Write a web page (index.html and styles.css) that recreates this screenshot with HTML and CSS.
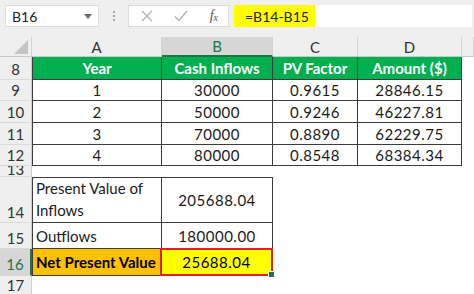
FILE: index.html
```html
<!DOCTYPE html>
<html lang="en">
<head>
    <meta charset="UTF-8">
    <title>NPV sheet</title>
    <link rel="stylesheet" href="styles.css">
</head>
<body>

    <div class="fbar">
        <div class="namebox">
            <span>B16</span>
            <svg class="drop" width="8" height="5" viewBox="0 0 8 5"><path d="M0 0h8L4 5z" fill="#6b6b6b"/></svg>
        </div>
        <div class="grip"><i></i><i></i><i></i></div>
        <div class="btns">
            <svg width="12" height="12" viewBox="0 0 12 12"><path d="M1 1l10 10M11 1L1 11" stroke="#b4b4b4" stroke-width="1.4"/></svg>
            <svg width="14" height="12" viewBox="0 0 14 12"><path d="M1 6.5l4 4L13 1" fill="none" stroke="#b4b4b4" stroke-width="1.4"/></svg>
            <span class="fx">f<sub>x</sub></span>
        </div>
        <div class="formula"><span class="hl">=B14-B15</span></div>
    </div>

    <div class="sheet">
        <!-- column headings -->
        <div class="corner"><svg width="14" height="14" viewBox="0 0 14 14"><path d="M14 0V14H0z" fill="#c4c4c4"/></svg></div>
        <div class="ch">A</div>
        <div class="ch sel">B</div>
        <div class="ch">C</div>
        <div class="ch">D</div>
        <div class="ch"></div>

        <div class="rh">8</div>
        <div class="c head first">Year</div>
        <div class="c head">Cash Inflows</div>
        <div class="c head">PV Factor</div>
        <div class="c head">Amount ($)</div>
        <div></div>

        <div class="rh">9</div>
        <div class="c first num">1</div>
        <div class="c num">30000</div>
        <div class="c num">0.9615</div>
        <div class="c num">28846.15</div>
        <div></div>

        <div class="rh">10</div>
        <div class="c first num">2</div>
        <div class="c num">50000</div>
        <div class="c num">0.9246</div>
        <div class="c num">46227.81</div>
        <div></div>

        <div class="rh">11</div>
        <div class="c first num">3</div>
        <div class="c num">70000</div>
        <div class="c num">0.8890</div>
        <div class="c num">62229.75</div>
        <div></div>

        <div class="rh">12</div>
        <div class="c first num">4</div>
        <div class="c num">80000</div>
        <div class="c num">0.8548</div>
        <div class="c num">68384.34</div>
        <div></div>

        <div class="rh short">13</div>
        <div class="rest"></div>

        <div class="rh">14</div>
        <div class="c first top label wrap">Present Value of Inflows</div>
        <div class="c top num">205688.04</div>
        <div class="rest3"></div>

        <div class="rh">15</div>
        <div class="c first label">Outflows</div>
        <div class="c num">180000.00</div>
        <div class="rest3"></div>

        <div class="rh sel">16</div>
        <div class="c first label npv">Net Present Value</div>
        <div class="c result num">25688.04<span class="handle"></span></div>
        <div class="rest3"></div>

        <div class="rh">17</div>
        <div class="rest"></div>
    </div>

</body>
</html>
```

FILE: styles.css
```css
body {
    margin: 0;
    background-color: #ffffff;
    font-family: Lato, "Open Sans", sans-serif;
    color: #1a1a1a;
    width: 474px;
    height: 294px;
    overflow: hidden;
}

/* formula bar */
.fbar {
    height: 37px;
    background-color: #efefef;
    display: flex;
    align-items: flex-start;
    padding-top: 5px;
    box-sizing: border-box;
}

.namebox {
    margin-left: 5px;
    width: 94px;
    height: 22px;
    background-color: #fff;
    border: 1px solid #dcdcdc;
    box-sizing: border-box;
    display: flex;
    align-items: center;
    justify-content: space-between;
    padding: 0 6px 0 6px;
    font-size: 14px;
    color: #222;
}

.grip {
    width: 29px;
    height: 22px;
    display: flex;
    flex-direction: column;
    align-items: center;
    justify-content: center;
    gap: 2px;
}

.grip i {
    width: 2px;
    height: 2px;
    background-color: #a8a8a8;
}

.btns {
    width: 101px;
    height: 22px;
    background-color: #fff;
    border: 1px solid #dcdcdc;
    box-sizing: border-box;
    display: flex;
    align-items: center;
    justify-content: space-between;
    padding: 0 10px 0 12px;
}

.fx {
    font-family: "Liberation Serif", serif;
    font-style: italic;
    font-size: 14px;
    color: #555;
    line-height: 1;
}

.fx sub {
    font-size: 10px;
    vertical-align: -1px;
}

.formula {
    margin-left: 5px;
    flex: 1;
    margin-right: 2px;
    height: 22px;
    background-color: #fff;
}

.hl {
    display: inline-flex;
    align-items: center;
    height: 22px;
    width: 81px;
    padding-left: 11px;
    box-sizing: border-box;
    background-color: #ffff00;
    font-size: 14px;
    color: #222;
}

/* sheet grid */
.sheet {
    display: grid;
    grid-template-columns: 32px 130px 111px 85px 104px 12px;
    grid-template-rows: 20px 23px 21px 22px 22px 21px 11px 46px 26px 27px 20px;
    font-size: 15px;
}

.corner {
    background-color: #efefef;
    border-right: 1px solid #d4d4d4;
    border-bottom: 1px solid #c8c8c8;
    display: flex;
    align-items: flex-end;
    justify-content: flex-end;
    padding: 0 3px 2px 0;
    box-sizing: border-box;
}

.ch {
    background-color: #efefef;
    border-right: 1px solid #d4d4d4;
    border-bottom: 1px solid #c8c8c8;
    box-sizing: border-box;
    display: flex;
    align-items: center;
    justify-content: center;
    color: #333;
    font-size: 15px;
}

.ch.sel {
    background-color: #d6d6d6;
    color: #217346;
    border-bottom: 2px solid #217346;
}

.rh {
    background-color: #efefef;
    border-right: 1px solid #cfcfcf;
    border-bottom: 1px solid #dadada;
    box-sizing: border-box;
    display: flex;
    align-items: flex-end;
    justify-content: center;
    color: #333;
    font-size: 15px;
    line-height: 19px;
    overflow: hidden;
}

.rh.short {
    line-height: 14px;
}

.rh.sel {
    background-color: #d6d6d6;
    color: #217346;
    border-right: 2px solid #217346;
    line-height: 22px;
}

.c {
    border-right: 1px solid #3c3c3c;
    border-bottom: 1px solid #3c3c3c;
    box-sizing: border-box;
    display: flex;
    align-items: center;
    justify-content: center;
    white-space: nowrap;
}

.c.num {
    letter-spacing: 0.5px;
}

.c.first {
    border-left: 1px solid #3c3c3c;
}

.c.top {
    border-top: 1px solid #3c3c3c;
}

.c.head {
    background-color: #00b050;
    color: #fff;
    font-weight: bold;
}

.c.label {
    justify-content: flex-start;
    padding-left: 3px;
}

.c.wrap {
    white-space: normal;
    align-items: flex-end;
    line-height: 22px;
    padding-bottom: 1px;
}

.c.npv {
    background-color: #ffc000;
    font-weight: bold;
    color: #000;
}

.c.result {
    position: relative;
    background-color: #ffff00;
    border: 2px solid #e81c1c;
    margin-left: -2px;
    margin-top: -1px;
    color: #000;
}

.handle {
    position: absolute;
    right: -4px;
    bottom: -4px;
    width: 5px;
    height: 5px;
    background-color: #217346;
    border: 1px solid #fff;
}

.rest {
    grid-column: 2 / 7;
}

.rest3 {
    grid-column: 4 / 7;
}
```
